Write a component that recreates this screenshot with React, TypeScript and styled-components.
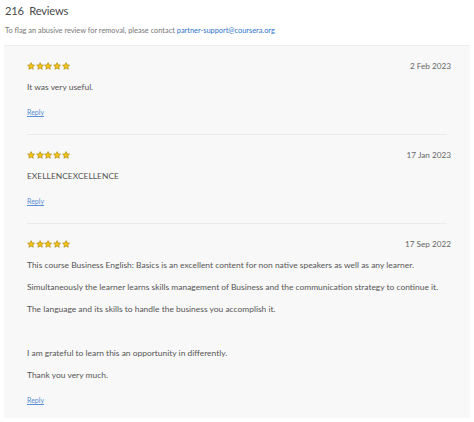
import styled, { createGlobalStyle } from "styled-components";

const GlobalStyle = createGlobalStyle`
  html, body {
    margin: 0;
    padding: 0;
    background: #ffffff;
    font-family: Lato, "Open Sans", sans-serif;
  }
`;

const Page = styled.div`
  width: 474px;
  height: 422px;
  overflow: hidden;
  display: flex;
  flex-direction: column;
`;

const Header = styled.div`
  padding: 3px 5px 0 5px;
`;

const Title = styled.h2`
  margin: 0;
  font-size: 11.2px;
  line-height: 16px;
  font-weight: 400;
  letter-spacing: -0.2px;
  color: #4a4a4a;
  white-space: pre;
`;

const FlagNote = styled.p`
  margin: 5px 0 0 0;
  font-size: 7.4px;
  line-height: 14px;
  color: #777;

  a {
    color: #2a73cc;
    text-decoration: none;
  }
`;

const Panel = styled.div`
  margin: 7px 4px 0 4px;
  background: #f8f8f8;
  border-top: 1px solid #efefef;
  display: flex;
  flex-direction: column;
`;

const Review = styled.div<{ $last?: boolean }>`
  padding: 13px 19px ${(p) => (p.$last ? "13px" : "17px")} 23px;
  display: flex;
  flex-direction: column;
`;

const Separator = styled.div`
  height: 1px;
  margin: 0 23px;
  background: #ebebeb;
`;

const ReviewTop = styled.div`
  display: flex;
  justify-content: space-between;
  align-items: center;
  height: 14px;
`;

const Stars = styled.div`
  display: flex;
  gap: 0.5px;
`;

const DateText = styled.span`
  font-size: 8.2px;
  color: #666;
`;

const Body = styled.div`
  margin-top: 7px;
  display: flex;
  flex-direction: column;
  gap: 8px;
`;

const Para = styled.p`
  margin: 0;
  min-height: 14px;
  font-size: 8.45px;
  line-height: 14px;
  color: #555;
  white-space: nowrap;
`;

const ReplyLink = styled.a`
  margin-top: 13px;
  align-self: flex-start;
  font-size: 7px;
  line-height: 10px;
  color: #5a8fd6;
  text-decoration: underline;
`;

const Star = () => (
  <svg width="8.2" height="8.2" viewBox="0 0 24 24">
    <path
      d="M12 1.8l3.1 6.6 7.2.9-5.3 5 1.4 7.1L12 17.9l-6.4 3.5 1.4-7.1-5.3-5 7.2-.9z"
      fill="#f3c316"
      stroke="#a98410"
      strokeWidth="1.8"
      strokeLinejoin="round"
    />
  </svg>
);

type ReviewData = {
  date: string;
  paragraphs: string[];
};

const reviews: ReviewData[] = [
  { date: "2 Feb 2023", paragraphs: ["It was very useful."] },
  { date: "17 Jan 2023", paragraphs: ["EXELLENCEXCELLENCE"] },
  {
    date: "17 Sep 2022",
    paragraphs: [
      "This course Business English: Basics is an excellent content for non native speakers as well as any learner.",
      "Simultaneously the learner learns skills management of Business and the communication strategy to continue it.",
      "The language and its skills to handle the business you accomplish it.",
      "",
      "I am grateful to learn this an opportunity in differently.",
      "Thank you very much.",
    ],
  },
];

const App = () => {
  return (
    <>
      <GlobalStyle />
      <Page>
        <Header>
          <Title>{"216  Reviews"}</Title>
          <FlagNote>
            To flag an abusive review for removal, please contact{" "}
            <a href="#">partner-support@coursera.org</a>
          </FlagNote>
        </Header>
        <Panel>
          {reviews.map((review, i) => (
            <div key={review.date}>
              {i > 0 && <Separator />}
              <Review $last={i === reviews.length - 1}>
                <ReviewTop>
                  <Stars>
                    {[0, 1, 2, 3, 4].map((s) => (
                      <Star key={s} />
                    ))}
                  </Stars>
                  <DateText>{review.date}</DateText>
                </ReviewTop>
                <Body>
                  {review.paragraphs.map((text, j) => (
                    <Para key={j}>{text}</Para>
                  ))}
                </Body>
                <ReplyLink href="#">Reply</ReplyLink>
              </Review>
            </div>
          ))}
        </Panel>
      </Page>
    </>
  );
};

export default App;
